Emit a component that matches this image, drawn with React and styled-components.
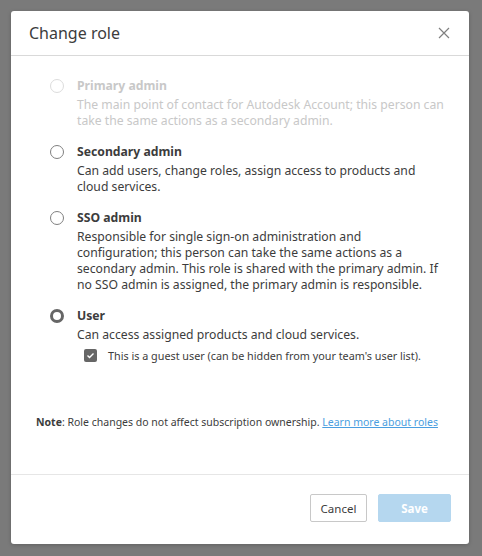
import React, { useState } from "react";
import styled, { createGlobalStyle } from "styled-components";

const Global = createGlobalStyle`
  html, body { margin: 0; padding: 0; }
  body {
    background: #7a7a7a;
    font-family: "Noto Sans", "Open Sans", sans-serif;
    color: #3c3c3c;
  }
`;

const Overlay = styled.div`
  width: 482px;
  height: 556px;
  padding: 11px 13px 12px 11px;
  box-sizing: border-box;
`;

const Modal = styled.div`
  background: #fff;
  border-radius: 3px;
  height: 100%;
  display: flex;
  flex-direction: column;
  box-shadow: 0 1px 4px rgba(0, 0, 0, 0.2);
`;

const Header = styled.div`
  height: 44px;
  display: flex;
  align-items: center;
  justify-content: space-between;
  padding: 0 18px 0 18px;
  border-bottom: 1px solid #d9d9d9;
`;

const Title = styled.h1`
  margin: 0;
  font-size: 16px;
  font-weight: 400;
  color: #3c3c3c;
`;

const Close = styled.button`
  border: 0;
  background: none;
  padding: 0;
  width: 14px;
  height: 14px;
  display: flex;
  cursor: pointer;
`;

const Body = styled.div`
  flex: 1;
  padding: 21px 14px 0 25px;
  display: flex;
  flex-direction: column;
`;

const Options = styled.div`
  padding-left: 14px;
  display: flex;
  flex-direction: column;
  gap: 14px;
`;

const Option = styled.label`
  display: grid;
  grid-template-columns: 27px 1fr;
  color: ${(p) => (p.disabled ? "#c8c8c8" : "#3c3c3c")};
  cursor: ${(p) => (p.disabled ? "default" : "pointer")};
`;

const Radio = styled.span`
  width: 14px;
  height: 14px;
  margin-top: 2px;
  box-sizing: border-box;
  border-radius: 50%;
  border: ${(p) =>
    p.checked ? "3px solid #666" : p.disabled ? "1px solid #dcdcdc" : "1px solid #808080"};
`;

const OptTitle = styled.div`
  font-size: 12.2px;
  font-weight: 700;
  line-height: 18px;
`;

const OptDesc = styled.div`
  margin-top: 2px;
  font-size: 12.2px;
  line-height: 16px;
  white-space: nowrap;
`;

const CheckRow = styled.div`
  display: flex;
  align-items: center;
  gap: 11px;
  margin: 5px 0 0 7px;
  font-size: 10.8px;
  color: #3c3c3c;
`;

const Box = styled.span`
  width: 13px;
  height: 13px;
  border-radius: 2px;
  background: #666;
  display: flex;
  align-items: center;
  justify-content: center;
`;

const Note = styled.p`
  margin: 51px 0 0 0;
  font-size: 10.5px;
  line-height: 16px;
  color: #3c3c3c;
  white-space: nowrap;
  b { font-weight: 700; }
`;

const Link = styled.a`
  color: #4a9ee0;
  text-decoration: underline;
`;

const Footer = styled.div`
  height: 70px;
  box-sizing: border-box;
  padding: 0 18px 3px 18px;
  border-top: 1px solid #e6e6e6;
  display: flex;
  align-items: center;
  justify-content: flex-end;
  gap: 11px;
`;

const Button = styled.button`
  height: 28px;
  min-width: ${(p) => (p.primary ? "73px" : "57px")};
  padding: 0 8px;
  font-family: inherit;
  font-size: 11.5px;
  font-weight: ${(p) => (p.primary ? 700 : 400)};
  border-radius: 2px;
  border: 1px solid ${(p) => (p.primary ? "#b5d7ef" : "#c8c8c8")};
  background: ${(p) => (p.primary ? "#b5d7ef" : "#fff")};
  color: ${(p) => (p.primary ? "#fff" : "#3c3c3c")};
`;

const roles = [
  {
    id: "primary",
    title: "Primary admin",
    desc: [
      "The main point of contact for Autodesk Account; this person can",
      "take the same actions as a secondary admin.",
    ],
    disabled: true,
  },
  {
    id: "secondary",
    title: "Secondary admin",
    desc: ["Can add users, change roles, assign access to products and", "cloud services."],
  },
  {
    id: "sso",
    title: "SSO admin",
    desc: [
      "Responsible for single sign-on administration and",
      "configuration; this person can take the same actions as a",
      "secondary admin. This role is shared with the primary admin. If",
      "no SSO admin is assigned, the primary admin is responsible.",
    ],
  },
  {
    id: "user",
    title: "User",
    desc: ["Can access assigned products and cloud services."],
  },
];

export default function App() {
  const [role, setRole] = useState("user");
  return (
    <Overlay>
      <Global />
      <Modal>
        <Header>
          <Title>Change role</Title>
          <Close aria-label="Close">
            <svg width="14" height="14" viewBox="0 0 14 14">
              <path d="M2 2L12 12M12 2L2 12" stroke="#808080" strokeWidth="1.2" />
            </svg>
          </Close>
        </Header>
        <Body>
          <Options>
            {roles.map((r) => (
              <Option
                key={r.id}
                disabled={r.disabled}
                onClick={() => !r.disabled && setRole(r.id)}
              >
                <Radio checked={role === r.id} disabled={r.disabled} />
                <div>
                  <OptTitle>{r.title}</OptTitle>
                  <OptDesc>
                    {r.desc.map((line, i) => (
                      <div key={i}>{line}</div>
                    ))}
                  </OptDesc>
                  {r.id === "user" && (
                    <CheckRow>
                      <Box>
                        <svg width="9" height="9" viewBox="0 0 9 9">
                          <path d="M1.5 4.6L3.5 6.5L7.5 2.5" stroke="#fff" strokeWidth="1.4" fill="none" />
                        </svg>
                      </Box>
                      This is a guest user (can be hidden from your team's user list).
                    </CheckRow>
                  )}
                </div>
              </Option>
            ))}
          </Options>
          <Note>
            <b>Note</b>: Role changes do not affect subscription ownership.{" "}
            <Link href="#">Learn more about roles</Link>
          </Note>
        </Body>
        <Footer>
          <Button>Cancel</Button>
          <Button primary>Save</Button>
        </Footer>
      </Modal>
    </Overlay>
  );
}
